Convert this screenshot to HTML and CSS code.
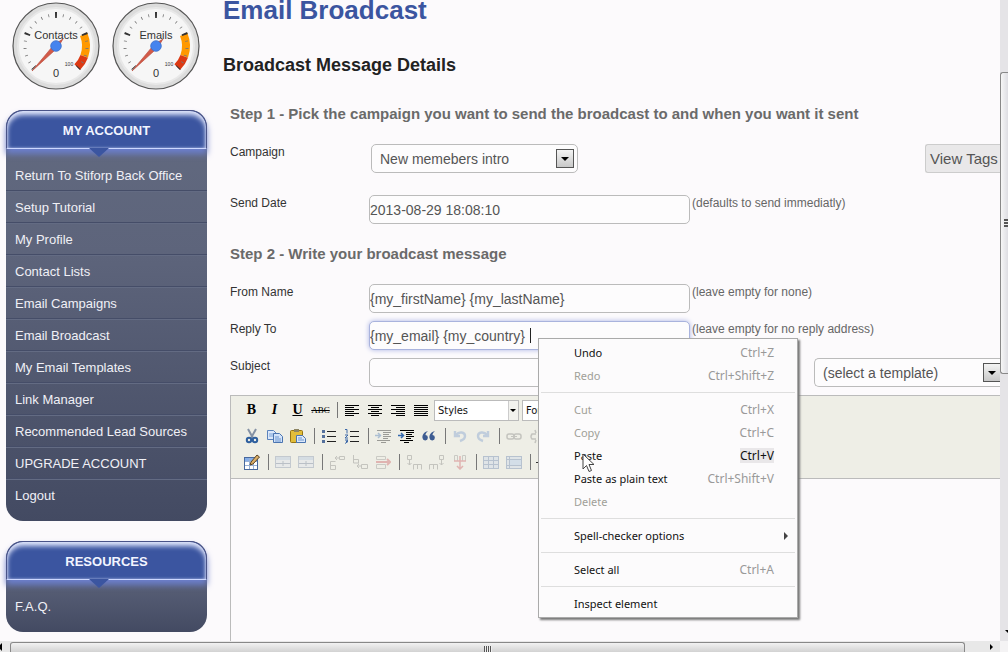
FILE: index.html
```html
<!DOCTYPE html>
<html lang="en">
<head>
<meta charset="utf-8">
<title>Email Broadcast</title>
<link rel="stylesheet" href="styles.css">
</head>
<body>
<svg class="defs" aria-hidden="true">
  <symbol id="dial" viewBox="-44 -44 88 88">
    <circle r="43" fill="#dcdcdc" stroke="#555" stroke-width="1.2"/>
    <circle r="38" fill="#f6f6f6" stroke="#e8e8e8" stroke-width="2"/>
    <path d="M27.7 -11.5A30 30 0 0 1 28.2 10.3" fill="none" stroke="#f90" stroke-width="8"/>
    <path d="M28.2 10.3A30 30 0 0 1 21.2 21.2" fill="none" stroke="#dc3912" stroke-width="8"/>
    <path d="M-21.9 21.9A31 31 0 1 1 21.9 21.9" pathLength="270" stroke-dasharray="1.5 12" stroke-dashoffset=".75" fill="none" stroke="#777" stroke-width="3"/>
    <path d="M-21.9 21.9A31 31 0 1 1 21.9 21.9" pathLength="270" stroke-dasharray="3.4 64.1" stroke-dashoffset="1.7" fill="none" stroke="#333" stroke-width="6"/>
  </symbol>
  <symbol id="needle" viewBox="-44 -44 88 88">
    <path d="M-24 25L-1.8 -1.6L7 -7L1.8 1.6Z" fill="#d25a48" stroke="#b5402f" stroke-width=".6"/>
    <circle r="5.3" fill="#4684ee" stroke="#3b6fca" stroke-width=".8"/>
  </symbol>
  <symbol id="al" viewBox="0 0 16 16"><path d="M1 3.5h14M1 5.5h9M1 7.5h14M1 9.5h9M1 11.5h14M1 13.5h9" stroke="#000"/></symbol>
  <symbol id="ac" viewBox="0 0 16 16"><path d="M1 3.5h14M4 5.5h8M1 7.5h14M4 9.5h8M1 11.5h14M4 13.5h8" stroke="#000"/></symbol>
  <symbol id="ar" viewBox="0 0 16 16"><path d="M1 3.5h14M6 5.5h9M1 7.5h14M6 9.5h9M1 11.5h14M6 13.5h9" stroke="#000"/></symbol>
  <symbol id="aj" viewBox="0 0 16 16"><path d="M1 3.5h14M1 5.5h14M1 7.5h14M1 9.5h14M1 11.5h14M1 13.5h14" stroke="#000"/></symbol>
  <symbol id="cut" viewBox="0 0 16 16"><path d="M4 1l5 9M12 1L7 10" stroke="#8592a5" stroke-width="2"/><circle cx="5" cy="12" r="2.2" fill="none" stroke="#2e5f9e" stroke-width="2"/><circle cx="11" cy="12" r="2.2" fill="none" stroke="#2e5f9e" stroke-width="2"/></symbol>
  <symbol id="copy" viewBox="0 0 16 16"><path d="M.5 2.5h6l3 3v6h-9z" fill="#dbe8fa" stroke="#5b83bd"/><path d="M2 6h5M2 8h4" stroke="#7da3d8"/><path d="M6.5 5.5h6l3 3v6h-9z" fill="#d3e3f9" stroke="#4a74b0"/><path d="M8 9h4M8 11h6M8 13h6" stroke="#6b95d0"/></symbol>
  <symbol id="paste" viewBox="0 0 16 16"><rect x=".5" y="2.5" width="12" height="12" rx="1" fill="#e2bd39" stroke="#957415"/><path d="M4 1h5v3H4z" fill="#8d8562"/><path d="M6.5 7.5h6l3 3v4h-9z" fill="#dce8fa" stroke="#4a74b0"/><path d="M8 10h4M8 12h6" stroke="#6b95d0"/></symbol>
  <symbol id="ul" viewBox="0 0 16 16"><path d="M1 2h3v3H1zM1 7h3v3H1zM1 12h3v3H1z" fill="#54709c"/><path d="M6 3.5h9M6 8.5h9M6 13.5h9" stroke="#222"/></symbol>
  <symbol id="ol" viewBox="0 0 16 16"><path d="M1 1.5h2v4M1 7h3l-3 3h3M1 12h3l-2 1.5h2L1 15.5" fill="none" stroke="#3d69a8"/><path d="M6 3.5h9M6 8.5h9M6 13.5h9" stroke="#222"/></symbol>
  <symbol id="ind" viewBox="0 0 16 16"><path d="M2 2.5h14M8 4.5h8M8 6.5h6M8 8.5h8M8 10.5h5M2 12.5h13M6 14.5h5" stroke="#000"/><path d="M0 7.5h5M3 5l2.5 2.5L3 10" fill="none" stroke="#3469ae" stroke-width="1.5"/></symbol>
  <symbol id="quote" viewBox="0 0 16 16"><path d="M7 3C3 4 1 7 1.5 10a2.7 2.7 0 1 0 3-3C4.500 5.5 5.5 4.5 7 3zM14 3c-4 1-6 4-5.5 7a2.700 2.700 0 1 0 3-3c0-1.500 1-2.500 2.500-4z" fill="#3d5c92"/></symbol>
  <symbol id="undo" viewBox="0 0 16 16"><path d="M3 3v5h5M4 7c3-4 9-3 9 1 0 3-2 4-5 5" fill="none" stroke="#6d92ca" stroke-width="2.4"/></symbol>
  <symbol id="link" viewBox="0 0 16 16"><rect x="1" y="6" width="7" height="5" rx="2" fill="none" stroke="#777" stroke-width="1.5"/><rect x="8" y="6" width="7" height="5" rx="2" fill="none" stroke="#777" stroke-width="1.5"/><path d="M5 8.5h6" stroke="#777"/></symbol>
  <symbol id="unlink" viewBox="0 0 16 16"><path d="M7 6H3q-2 2.5 0 5h4M10 6h4M10 11h4M6 2l1 3M11 2l-1 3M6 15l1-3" fill="none" stroke="#777" stroke-width="1.5"/></symbol>
  <symbol id="table" viewBox="0 0 16 16"><rect x=".5" y="3.5" width="13" height="12" fill="#fff" stroke="#48699d"/><path d="M1 4h12v3H1z" fill="#86aee8"/><path d="M1 7.5h12M1 11.5h12M5.5 4v11M9.5 4v11" stroke="#9ab3d6"/><path d="M6 11l1-3 6-7 2.5 2-6.5 7z" fill="#d9ad66" stroke="#5c4525"/></symbol>
  <symbol id="cell" viewBox="0 0 16 16"><rect x=".5" y="2.5" width="15" height="11" fill="#dbe2ef" stroke="#7587a7"/><path d="M1 3h14v3H1z" fill="#a9bedf"/><path d="M1 9.5h5M10 9.5h5M8 7v5M6 9.5h4" stroke="#5c6d8e"/></symbol>
  <symbol id="rowa" viewBox="0 0 16 16"><path d="M1.500 15.5v-8h5M1.5 11.5h5v4h-5M10.5 2.5h5v3h-5zM10 4H6M8 2L6 4l2 2" fill="none" stroke="#777"/></symbol>
  <symbol id="rowb" viewBox="0 0 16 16"><path d="M1.5 1v8h5M1.5 5.5h5v4M9.5 10.5h6v4h-6zM9 12H5M7 10l-2 2 2 2" fill="none" stroke="#777"/></symbol>
  <symbol id="rowx" viewBox="0 0 16 16"><path d="M1.5 2.5h9v3h-9zM1.5 10.5h9v4h-9z" fill="none" stroke="#888"/><path d="M1 8h14M12 5l3 3-3 3" fill="none" stroke="#c94b50" stroke-width="2"/></symbol>
  <symbol id="cola" viewBox="0 0 16 16"><path d="M1.5 1.5h4v4h-4zM3.5 6v5M1.5 9l2 2 2-2M7.5 15.5v-5h8v5M11.5 10v5" fill="none" stroke="#777"/></symbol>
  <symbol id="colx" viewBox="0 0 16 16"><path d="M2.5 7V1.500h3V7M10.5 7V1.5h3V7" fill="none" stroke="#888"/><path d="M2 7h12M8 2v13M5 12l3 3 3-3" fill="none" stroke="#c94b50" stroke-width="1.5"/></symbol>
  <symbol id="split" viewBox="0 0 16 16"><rect x=".5" y="2.5" width="15" height="12" fill="#c5d3ea" stroke="#5272a5"/><path d="M1 6.5h14M1 10.5h14M5.5 3v11M10.5 3v11" stroke="#5272a5"/></symbol>
  <symbol id="merge" viewBox="0 0 16 16"><rect x=".5" y="2.5" width="15" height="12" fill="#c5d3ea" stroke="#5272a5"/><path d="M1 5.500h14M1 11.5h14M3.5 3v11" stroke="#5272a5"/><path d="M4 6h11v5H4z" fill="#a3c1ee"/></symbol>
</svg>

<div class="window">
  <div class="page">
    <aside class="sidebar">
      <div class="gauges">
        <svg viewBox="-44 -44 88 88"><use href="#dial" x="-44" y="-44" width="88" height="88"/><text class="g-name" y="-7">Contacts</text><use href="#needle" x="-44" y="-44" width="88" height="88"/><text class="g-val" y="31">0</text><text class="g-max" x="13" y="20">100</text></svg>
        <svg viewBox="-44 -44 88 88"><use href="#dial" x="-44" y="-44" width="88" height="88"/><text class="g-name" y="-7">Emails</text><use href="#needle" x="-44" y="-44" width="88" height="88"/><text class="g-val" y="31">0</text><text class="g-max" x="13" y="20">100</text></svg>
      </div>
      <nav class="box">
        <h2 class="box-title">MY ACCOUNT</h2>
        <ul>
          <li><a href="#">Return To Stiforp Back Office</a></li>
          <li><a href="#">Setup Tutorial</a></li>
          <li><a href="#">My Profile</a></li>
          <li><a href="#">Contact Lists</a></li>
          <li><a href="#">Email Campaigns</a></li>
          <li><a href="#">Email Broadcast</a></li>
          <li><a href="#">My Email Templates</a></li>
          <li><a href="#">Link Manager</a></li>
          <li><a href="#">Recommended Lead Sources</a></li>
          <li><a href="#">UPGRADE ACCOUNT</a></li>
          <li><a href="#">Logout</a></li>
        </ul>
      </nav>
      <nav class="box">
        <h2 class="box-title">RESOURCES</h2>
        <ul>
          <li><a href="#">F.A.Q.</a></li>
        </ul>
      </nav>
    </aside>

    <main class="main">
      <h1>Email Broadcast</h1>
      <h2>Broadcast Message Details</h2>
      <form class="form">
        <h3>Step 1 - Pick the campaign you want to send the broadcast to and when you want it sent</h3>
        <div class="row">
          <label for="campaign">Campaign</label>
          <span class="pick campaign"><select id="campaign"><option>New memebers intro</option></select><i class="drop"></i></span>
          <button type="button" class="tags">View Tags</button>
        </div>
        <div class="row">
          <label for="date">Send Date</label>
          <span class="field"><input id="date" type="text" value="2013-08-29 18:08:10"></span>
          <span class="hint">(defaults to send immediatly)</span>
        </div>
        <h3>Step 2 - Write your broadcast message</h3>
        <div class="row">
          <label for="from">From Name</label>
          <span class="field"><input id="from" type="text" value="{my_firstName} {my_lastName}"></span>
          <span class="hint">(leave empty for none)</span>
        </div>
        <div class="row tight">
          <label for="reply">Reply To</label>
          <span class="field active"><input id="reply" type="text" value="{my_email} {my_country} "><i class="caret"></i></span>
          <span class="hint">(leave empty for no reply address)</span>
        </div>
        <div class="row tight">
          <label for="subject">Subject</label>
          <span class="field"><input id="subject" type="text"></span>
          <span class="pick template"><select aria-label="Template"><option>(select a template)</option></select><i class="drop"></i></span>
        </div>

        <div class="editor">
          <div class="toolbar">
            <div class="tools">
              <button type="button" class="t-b">B</button><button type="button" class="t-i">I</button><button type="button" class="t-u">U</button><button type="button" class="t-s">ABC</button><i class="sep"></i>
              <button type="button" aria-label="Align left"><svg><use href="#al"/></svg></button><button type="button" aria-label="Align center"><svg><use href="#ac"/></svg></button><button type="button" aria-label="Align right"><svg><use href="#ar"/></svg></button><button type="button" aria-label="Justify"><svg><use href="#aj"/></svg></button>
              <span class="mini"><select aria-label="Styles"><option>Styles</option></select><i class="arrow"></i></span>
              <span class="mini"><select aria-label="Format"><option>Format</option></select><i class="arrow"></i></span>
            </div>
            <div class="tools">
              <button type="button" aria-label="Cut"><svg><use href="#cut"/></svg></button><button type="button" aria-label="Copy"><svg><use href="#copy"/></svg></button><button type="button" aria-label="Paste"><svg><use href="#paste"/></svg></button><i class="sep"></i>
              <button type="button" aria-label="Bullets"><svg><use href="#ul"/></svg></button><button type="button" aria-label="Numbering"><svg><use href="#ol"/></svg></button><i class="sep"></i>
              <button type="button" aria-label="Outdent" disabled><svg><use href="#ind"/></svg></button><button type="button" aria-label="Indent"><svg><use href="#ind"/></svg></button><button type="button" aria-label="Blockquote"><svg><use href="#quote"/></svg></button><i class="sep"></i>
              <button type="button" aria-label="Undo" disabled><svg><use href="#undo"/></svg></button><button type="button" aria-label="Redo" disabled><svg class="flip"><use href="#undo"/></svg></button><i class="sep"></i>
              <button type="button" aria-label="Link" disabled><svg><use href="#link"/></svg></button><button type="button" aria-label="Unlink" disabled><svg><use href="#unlink"/></svg></button>
            </div>
            <div class="tools">
              <button type="button" aria-label="Table"><svg><use href="#table"/></svg></button><i class="sep"></i>
              <button type="button" aria-label="Row properties" disabled><svg><use href="#cell"/></svg></button><button type="button" aria-label="Cell properties" disabled><svg><use href="#cell"/></svg></button><i class="sep"></i>
              <button type="button" aria-label="Row before" disabled><svg><use href="#rowa"/></svg></button><button type="button" aria-label="Row after" disabled><svg><use href="#rowb"/></svg></button><button type="button" aria-label="Delete row" disabled><svg><use href="#rowx"/></svg></button><i class="sep"></i>
              <button type="button" aria-label="Column before" disabled><svg><use href="#cola"/></svg></button><button type="button" aria-label="Column after" disabled><svg class="flip"><use href="#cola"/></svg></button><button type="button" aria-label="Delete column" disabled><svg><use href="#colx"/></svg></button><i class="sep"></i>
              <button type="button" aria-label="Split cells" disabled><svg><use href="#split"/></svg></button><button type="button" aria-label="Merge cells" disabled><svg><use href="#merge"/></svg></button><i class="sep"></i>
              <i class="dash"></i>
            </div>
          </div>
          <div class="canvas"></div>
        </div>
      </form>
    </main>
  </div>

  <div class="vbar"><div class="vthumb"><i></i></div><svg class="down" viewBox="0 0 4 4"><path d="M0 0h8L4 4z"/></svg></div>
  <div class="hbar"><svg class="left" viewBox="0 0 4 8"><path d="M2 0v8L-2 4z"/></svg><div class="hthumb"><i></i></div><svg class="right" viewBox="0 0 4 8"><path d="M0 1v6l3-3z"/></svg></div>
  <div class="corner"></div>
</div>

<div class="menu" role="menu">
  <button type="button" role="menuitem"><span>Undo</span><kbd>Ctrl+Z</kbd></button>
  <button type="button" role="menuitem" disabled><span>Redo</span><kbd>Ctrl+Shift+Z</kbd></button>
  <hr>
  <button type="button" role="menuitem" disabled><span>Cut</span><kbd>Ctrl+X</kbd></button>
  <button type="button" role="menuitem" disabled><span>Copy</span><kbd>Ctrl+C</kbd></button>
  <button type="button" role="menuitem" class="hot"><span>Paste</span><kbd>Ctrl+V</kbd></button>
  <button type="button" role="menuitem"><span>Paste as plain text</span><kbd>Ctrl+Shift+V</kbd></button>
  <button type="button" role="menuitem" disabled><span>Delete</span></button>
  <hr>
  <button type="button" role="menuitem" class="sub"><span>Spell-checker options</span><svg viewBox="0 0 4 8"><path d="M0 0v8l4-4z"/></svg></button>
  <hr>
  <button type="button" role="menuitem"><span>Select all</span><kbd>Ctrl+A</kbd></button>
  <hr>
  <button type="button" role="menuitem"><span>Inspect element</span></button>
</div>
<svg class="pointer" viewBox="0 0 13 20"><path d="M1 1v15l3.5-3.5L7 18.5l2.5-1L7 11.5h5z" fill="#fff" stroke="#444"/></svg>
</body>
</html>
```
FILE: styles.css
```css
* { box-sizing: border-box; }
body {
  margin: 0;
  background: #fcfafc;
  font-family: "Liberation Sans", Arial, sans-serif;
  font-size: 12px;
  color: #333;
}
button, select, input { font-family: inherit; margin: 0; }
h1, h2, h3, ul { margin: 0; padding: 0; }
.defs { position: absolute; width: 0; height: 0; }

.window {
  display: grid;
  grid-template: minmax(0, 1fr) 11px / minmax(0, 1fr) 8px;
  height: 100vh;
  overflow: hidden;
}
.page {
  display: grid;
  grid-template-columns: 217px minmax(0, 1fr);
  overflow: hidden;
}

/* sidebar */
.sidebar { padding-left: 6px; padding-right: 10px; }
.gauges { display: flex; gap: 12px; padding: 2px 6px 20px; }
.gauges svg { width: 88px; height: 88px; flex: none; }
.g-name, .g-val { text-anchor: middle; font-size: 11px; fill: #333; }
.g-max { text-anchor: middle; font-size: 5px; fill: #333; }
.box {
  padding-bottom: 10px;
  margin-bottom: 20px;
  border-radius: 17px;
  background: linear-gradient(#626a80, #5d647b 35%, #434a62);
}
.box-title {
  position: relative;
  height: 39px;
  margin-bottom: 10px;
  border: 1px solid #4a5488;
  border-bottom-color: #cdd8ff;
  border-radius: 17px 17px 0 0;
  background: #3b55a0;
  box-shadow: inset 0 4px 5px #dfe5fb, inset 0 0 3px #a9b6e4, 0 5px 6px #6c7fcc;
  color: #f2f4ff;
  font-size: 13px;
  line-height: 39px;
  text-align: center;
}
.box-title::after {
  content: "";
  position: absolute;
  top: 37px;
  left: 82px;
  border: 10px solid transparent;
  border-top: 9px solid #3b55a0;
  border-bottom: 0;
}
.box ul { list-style: none; }
.box li { height: 32px; border-bottom: 1px solid #454d68; box-shadow: 0 1px #636b83; }
.box li:last-child { border-bottom-color: transparent; box-shadow: none; }
.box a {
  display: block;
  padding: 1px 0 0 9px;
  color: #f0f0f6;
  font-size: 13px;
  line-height: 31px;
  text-decoration: none;
}

/* main column */
.main { display: flex; flex-direction: column; padding-left: 6px; }
h1 { color: #3b55a0; font-size: 26px; line-height: 20px; }
.main h2 { margin-top: 35px; color: #222; font-size: 18px; line-height: 20px; }
.form { display: flex; flex-direction: column; flex: 1; padding: 31px 0 0 7px; }
h3 { color: #6a6a6a; font-size: 15px; line-height: 16px; white-space: nowrap; }
.row { display: flex; margin-top: 22px; height: 29px; }
.tight { margin-top: 8px; }
.row + h3 { margin-top: 22px; }
.row label { flex: 0 0 139px; padding-top: 1px; line-height: 14px; }
.hint { padding: 1px 0 0 2px; color: #666; line-height: 14px; white-space: nowrap; }
.field { position: relative; flex: 0 0 321px; }
.field input {
  width: 100%;
  height: 29px;
  padding: 1px 0 0;
  border: 1px solid #bbb;
  border-radius: 5px;
  outline: 0;
  background: #fdfcfd;
  color: #555;
  font-size: 14px;
}
.active input { border-color: #a9b3dd; box-shadow: 0 0 5px #aab4e4; }
.caret { position: absolute; left: 161px; top: 7px; width: 1px; height: 15px; background: #222; }
.pick { position: relative; }
.pick select {
  appearance: none;
  width: 100%;
  height: 29px;
  padding: 0 24px 0 8px;
  border: 1px solid #bbb;
  border-radius: 5px;
  background: #fdfcfd;
  color: #555;
  font-size: 14px;
}
.campaign { flex: 0 0 207px; margin-left: 2px; }
.template { flex: 0 0 186px; margin-left: auto; }
.template select { border-right: 0; border-radius: 5px 0 0 5px; }
.drop {
  position: absolute;
  right: 4px;
  top: 5px;
  width: 18px;
  height: 19px;
  border: 1px solid #555;
  background: linear-gradient(#f4f4f4, #c8c8c8);
  pointer-events: none;
}
.template .drop { right: 0; width: 17px; border-right: 0; }
.drop::after, .arrow::after {
  content: "";
  position: absolute;
  left: 4px;
  top: 7px;
  border: 4px solid transparent;
  border-top-color: #000;
  border-bottom: 0;
}
.tags {
  flex: 0 0 75px;
  margin-left: auto;
  padding: 0 0 0 4px;
  border: 1px solid #ccc;
  border-right: 0;
  border-radius: 3px 0 0 3px;
  background: #e9e8e9;
  color: #555;
  font-size: 15px;
  text-align: left;
  white-space: nowrap;
}

/* rich text editor */
.editor { display: flex; flex-direction: column; flex: 1; margin-top: 8px; border: 1px solid #bbb; border-width: 1px 0 0 1px; }
.toolbar { padding: 1px 0 3px 9px; border-bottom: 1px solid #bbb; background: #eeeee6; }
.tools { display: flex; align-items: center; height: 26px; }
.tools button {
  flex: 0 0 23px;
  display: grid;
  place-items: center;
  height: 24px;
  padding: 0;
  border: 0;
  background: none;
  color: #000;
}
.tools svg { width: 16px; height: 16px; }
.tools button:disabled svg { opacity: .35; }
.tools .flip { transform: scaleX(-1); }
.tools .t-b, .tools .t-i, .tools .t-u { font: bold 14px "Liberation Serif", serif; }
.tools .t-i { font-style: italic; }
.tools .t-u { text-decoration: underline; }
.tools .t-s { font: 9px "Liberation Serif", serif; text-decoration: line-through; }
.sep { flex: none; width: 1px; height: 16px; margin: 0 2px 0 5px; background: #777; }
.dash { width: 3px; height: 1px; margin-left: 3px; background: #333; }
.mini { position: relative; flex: none; width: 85px; height: 21px; margin-left: 2px; margin-right: 1px; }
.mini select {
  appearance: none;
  width: 100%;
  height: 100%;
  padding: 0 16px 0 3px;
  border: 1px solid #bbb;
  background: #fff;
  color: #111;
  font: 11px "DejaVu Sans Condensed", "Noto Sans", sans-serif;
}
.arrow { position: absolute; right: 1px; top: 1px; width: 10px; height: 19px; border-left: 1px solid #ccc; background: #f2f2ee; pointer-events: none; }
.arrow::after { left: 1px; top: 8px; border-width: 3px 3px 0; }
.canvas { flex: 1; }

/* scroll bars */
.vbar { display: flex; flex-direction: column; overflow: hidden; padding-top: 72px; background: #e5e4e7; }
.vthumb {
  display: grid;
  align-items: center;
  flex: 0 1 302px;
  border: 1px solid #888;
  border-right: 0;
  border-radius: 3px 0 0 3px;
  background: linear-gradient(90deg, #f6f6f6, #dddde2);
}
.vthumb i { height: 8px; margin-left: 3px; background: repeating-linear-gradient(#555 0 2px, #eee 2px 3px); }
.down { width: 4px; height: 4px; margin: auto 0 7px 5px; }
.hbar { display: flex; align-items: center; overflow: hidden; background: #e8e8e8; }
.hthumb {
  display: grid;
  justify-content: center;
  flex: 1;
  align-self: stretch;
  margin: 1px 25px 0 6px;
  border: 1px solid #888;
  border-bottom: 0;
  border-radius: 3px 3px 0 0;
  background: linear-gradient(#f2f2f2, #d2d2d2);
}
.hthumb i { width: 8px; height: 6px; margin-top: 3px; background: repeating-linear-gradient(90deg, #555 0 1px, #eee 1px 2px); }
.left, .right { width: 4px; height: 8px; flex: none; }
.right { margin-right: 6px; }
.corner { background: #f4f3f4; }

/* context menu */
.menu {
  position: absolute;
  left: 538px;
  top: 338px;
  width: 260px;
  padding: 2px 1px;
  border: 1px solid #aaa;
  background: #fcfbfc;
  box-shadow: 2px 2px 2px #777;
}
.menu button {
  display: flex;
  justify-content: space-between;
  align-items: center;
  width: 100%;
  height: 23px;
  padding: 0 22px 0 34px;
  border: 0;
  background: none;
  color: #111;
  font: 11px "Noto Sans", "Open Sans", sans-serif;
}
.menu kbd { font: 12px "Noto Sans", "Open Sans", sans-serif; color: #999; }
.menu button:disabled { color: #a0a098; }
.menu .hot kbd { color: #111; background: #e9e7e9; line-height: 15px; }
.menu .sub { padding-right: 8px; }
.menu .sub svg { width: 4px; height: 8px; fill: #444; }
.menu hr { height: 1px; margin: 5px 1px; border: 0; background: #dedede; }
.pointer { position: absolute; left: 582px; top: 453px; width: 13px; height: 20px; }
```
